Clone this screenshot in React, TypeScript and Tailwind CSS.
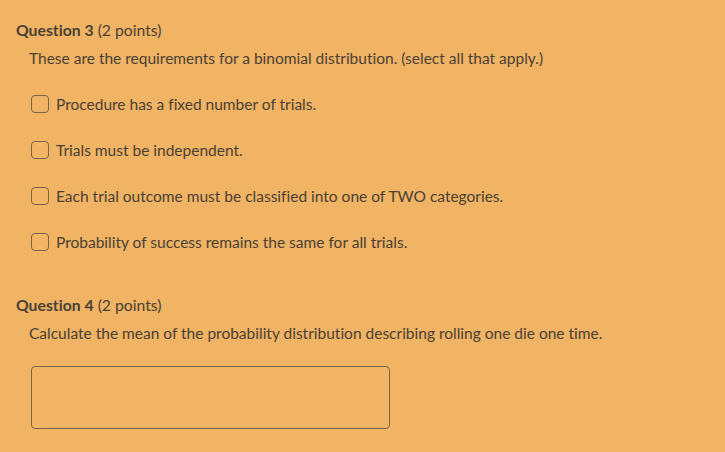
export default function App() {
  const options = [
    'Procedure has a fixed number of trials.',
    'Trials must be independent.',
    'Each trial outcome must be classified into one of TWO categories.',
    'Probability of success remains the same for all trials.',
  ];

  return (
    <div className="w-[725px] h-[452px] bg-[#f1b364] text-[#4a4134] font-['Lato',sans-serif] text-[15.5px] overflow-hidden [font-variant-ligatures:none]">
      <div className="pl-4 pt-[20px]">
        <h2 className="text-[15.75px] leading-[20px]">
          <span className="font-bold">Question 3</span> (2 points)
        </h2>
        <p className="ml-[13px] mt-[8px] leading-[20px]">
          These are the requirements for a binomial distribution. (select all that apply.)
        </p>
        <div className="ml-[15px] mt-[26px] flex flex-col gap-[26px]">
          {options.map((opt) => (
            <label key={opt} className="flex items-center gap-[7px] leading-[20px]">
              <span className="w-[18px] h-[18px] rounded-[4px] border border-[#7d6443] inline-block" />
              {opt}
            </label>
          ))}
        </div>
        <h2 className="mt-[43px] text-[15.75px] leading-[20px]">
          <span className="font-bold">Question 4</span> (2 points)
        </h2>
        <p className="ml-[13px] mt-[8px] leading-[20px]">
          Calculate the mean of the probability distribution describing rolling one die one time.
        </p>
        <div className="ml-[15px] mt-[23px] w-[359px] h-[63px] rounded-[4px] border border-[#7d6443]" />
      </div>
    </div>
  );
}
